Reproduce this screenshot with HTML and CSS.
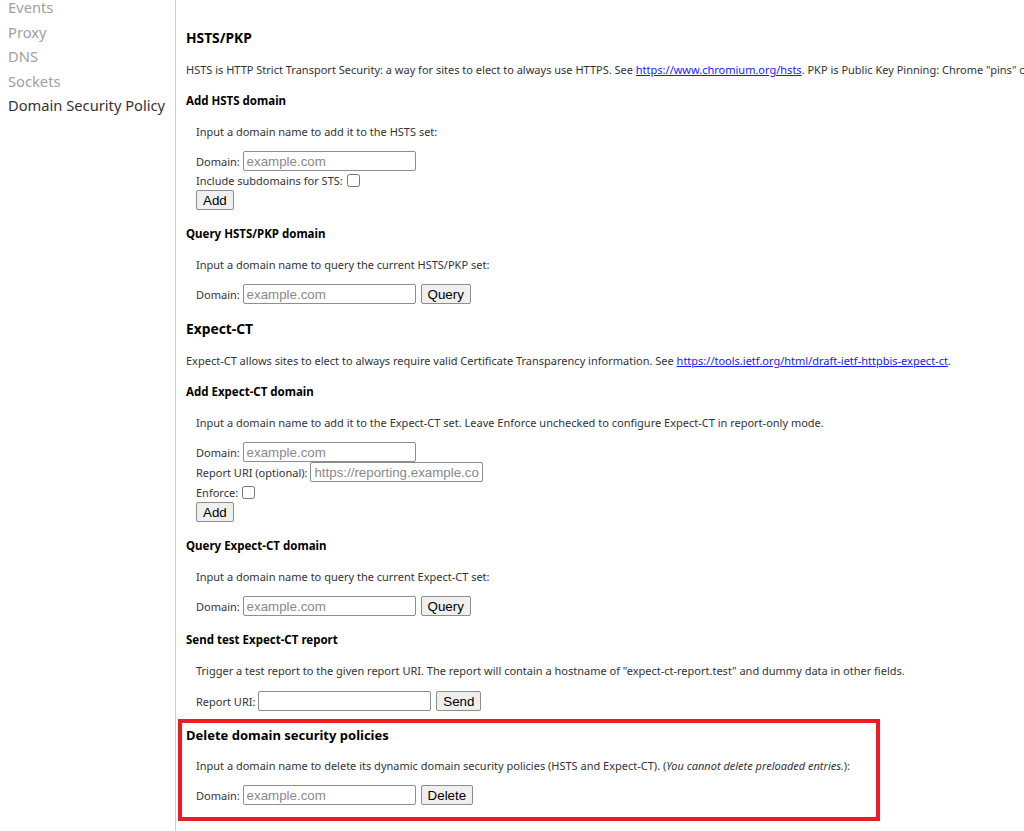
FILE: index.html
```html
<!DOCTYPE html>
<html>
<head>
<meta charset="utf-8">
<title>net-internals</title>
<link rel="stylesheet" href="styles.css">
</head>
<body>
<div class="page">
  <nav class="sidebar">
    <div class="nav-item">Events</div>
    <div class="nav-item">Proxy</div>
    <div class="nav-item">DNS</div>
    <div class="nav-item">Sockets</div>
    <div class="nav-item selected">Domain Security Policy</div>
  </nav>
  <main class="content">
    <h2 class="sec-title first">HSTS/PKP</h2>
    <p class="para">HSTS is HTTP Strict Transport Security: a way for sites to elect to always use HTTPS. See <a href="#">https://www.chromium.org/hsts</a>. PKP is Public Key Pinning: Chrome "pins" certain sites to a set of public keys.</p>

    <h3 class="sub-title">Add HSTS domain</h3>
    <div class="indent">
      <p class="para desc">Input a domain name to add it to the HSTS set:</p>
      <div class="form">
        <div class="row">Domain:&nbsp;<input type="text" class="field" placeholder="example.com"></div>
        <div class="row check-row">Include subdomains for STS:&nbsp;<input type="checkbox" class="check"></div>
        <div class="row"><button class="btn">Add</button></div>
      </div>
    </div>

    <h3 class="sub-title">Query HSTS/PKP domain</h3>
    <div class="indent">
      <p class="para desc">Input a domain name to query the current HSTS/PKP set:</p>
      <div class="form">
        <div class="row">Domain:&nbsp;<input type="text" class="field" placeholder="example.com"><button class="btn gap">Query</button></div>
      </div>
    </div>

    <h2 class="sec-title">Expect-CT</h2>
    <p class="para">Expect-CT allows sites to elect to always require valid Certificate Transparency information. See <a href="#">https://tools.ietf.org/html/draft-ietf-httpbis-expect-ct</a>.</p>

    <h3 class="sub-title">Add Expect-CT domain</h3>
    <div class="indent">
      <p class="para desc">Input a domain name to add it to the Expect-CT set. Leave Enforce unchecked to configure Expect-CT in report-only mode.</p>
      <div class="form">
        <div class="row">Domain:&nbsp;<input type="text" class="field" placeholder="example.com"></div>
        <div class="row">Report URI (optional):&nbsp;<input type="text" class="field" placeholder="https://reporting.example.com"></div>
        <div class="row">Enforce:&nbsp;<input type="checkbox" class="check"></div>
        <div class="row"><button class="btn">Add</button></div>
      </div>
    </div>

    <h3 class="sub-title">Query Expect-CT domain</h3>
    <div class="indent">
      <p class="para desc">Input a domain name to query the current Expect-CT set:</p>
      <div class="form">
        <div class="row">Domain:&nbsp;<input type="text" class="field" placeholder="example.com"><button class="btn gap">Query</button></div>
      </div>
    </div>

    <h3 class="sub-title">Send test Expect-CT report</h3>
    <div class="indent">
      <p class="para desc">Trigger a test report to the given report URI. The report will contain a hostname of "expect-ct-report.test" and dummy data in other fields.</p>
      <div class="form tight">
        <div class="row">Report URI:&nbsp;<input type="text" class="field"><button class="btn gap">Send</button></div>
      </div>
    </div>

    <section class="highlight">
      <h2 class="sec-title del-title">Delete domain security policies</h2>
      <div class="indent">
        <p class="para desc">Input a domain name to delete its dynamic domain security policies (HSTS and Expect-CT). (<i>You cannot delete preloaded entries.</i>):</p>
        <div class="form last">
          <div class="row">Domain:&nbsp;<input type="text" class="field" placeholder="example.com"><button class="btn gap">Delete</button></div>
        </div>
      </div>
    </section>
  </main>
</div>
</body>
</html>
```

FILE: styles.css
```css
html, body {
  margin: 0;
  padding: 0;
  background: #ffffff;
  overflow: hidden;
}

body {
  font-family: "Noto Sans", "Open Sans", sans-serif;
  font-size: 11px;
  color: #333333;
}

.page {
  display: flex;
  width: 1024px;
  height: 831px;
  overflow: hidden;
}

.sidebar {
  flex: 0 0 175px;
  width: 175px;
  min-width: 0;
  overflow: hidden;
  border-right: 1px solid #cfcfcf;
  margin-top: -5px;
  height: 836px;
}

.nav-item {
  padding-left: 8px;
  font-size: 14.7px;
  line-height: 24.5px;
  color: #a0a0a0;
  white-space: nowrap;
}

.nav-item.selected {
  color: #333333;
}

.content {
  flex: 1 1 auto;
  min-width: 0;
  padding-left: 10px;
  overflow: hidden;
}

.sec-title {
  margin: 12px 0 0 0;
  font-size: 13.8px;
  line-height: 18px;
  font-weight: 700;
  color: #000000;
}

.sec-title.first {
  margin-top: 29px;
}

.sub-title {
  margin: 15px 0 0 0;
  font-size: 11.5px;
  line-height: 16px;
  font-weight: 700;
  color: #000000;
}

.para {
  margin: 15px 0 0 0;
  line-height: 16px;
  white-space: nowrap;
}

.para a {
  color: #1a1aee;
  text-decoration: underline;
}

.indent {
  padding-left: 10px;
}

.form {
  margin-top: 11px;
  margin-bottom: 16px;
}

.form.tight {
  margin-top: 12px;
  margin-bottom: 8px;
}

.form.last {
  margin-bottom: 0;
}

.row {
  display: flex;
  align-items: center;
  height: 20px;
  white-space: nowrap;
}

.check-row {
  height: 19px;
}

.field {
  box-sizing: border-box;
  width: 173px;
  height: 20px;
  margin: 0;
  padding: 1px 3px;
  border: 1px solid #8d8d8d;
  border-radius: 2px;
  font-family: "Liberation Sans", Arial, sans-serif;
  font-size: 13.33px;
  color: #000;
  background: #fff;
}

.field::placeholder {
  color: #8a8a8a;
}

.check {
  width: 13px;
  height: 13px;
  margin: 0 0 0 1px;
}

.btn {
  box-sizing: border-box;
  height: 20px;
  margin: 0;
  padding: 0 6px;
  border: 1px solid #8d8d8d;
  border-radius: 2px;
  background: #efefef;
  font-family: "Liberation Sans", Arial, sans-serif;
  font-size: 13.33px;
  color: #000;
}

.btn.gap {
  margin-left: 5px;
}

.highlight {
  box-sizing: border-box;
  width: 702px;
  margin: 0 0 0 -8px;
  padding: 3px 0 12px 4px;
  border: 4px solid #ec1c24;
}

.del-title {
  margin-top: 0;
  font-size: 13px;
}

.highlight .para {
  margin-top: 14px;
}
```
